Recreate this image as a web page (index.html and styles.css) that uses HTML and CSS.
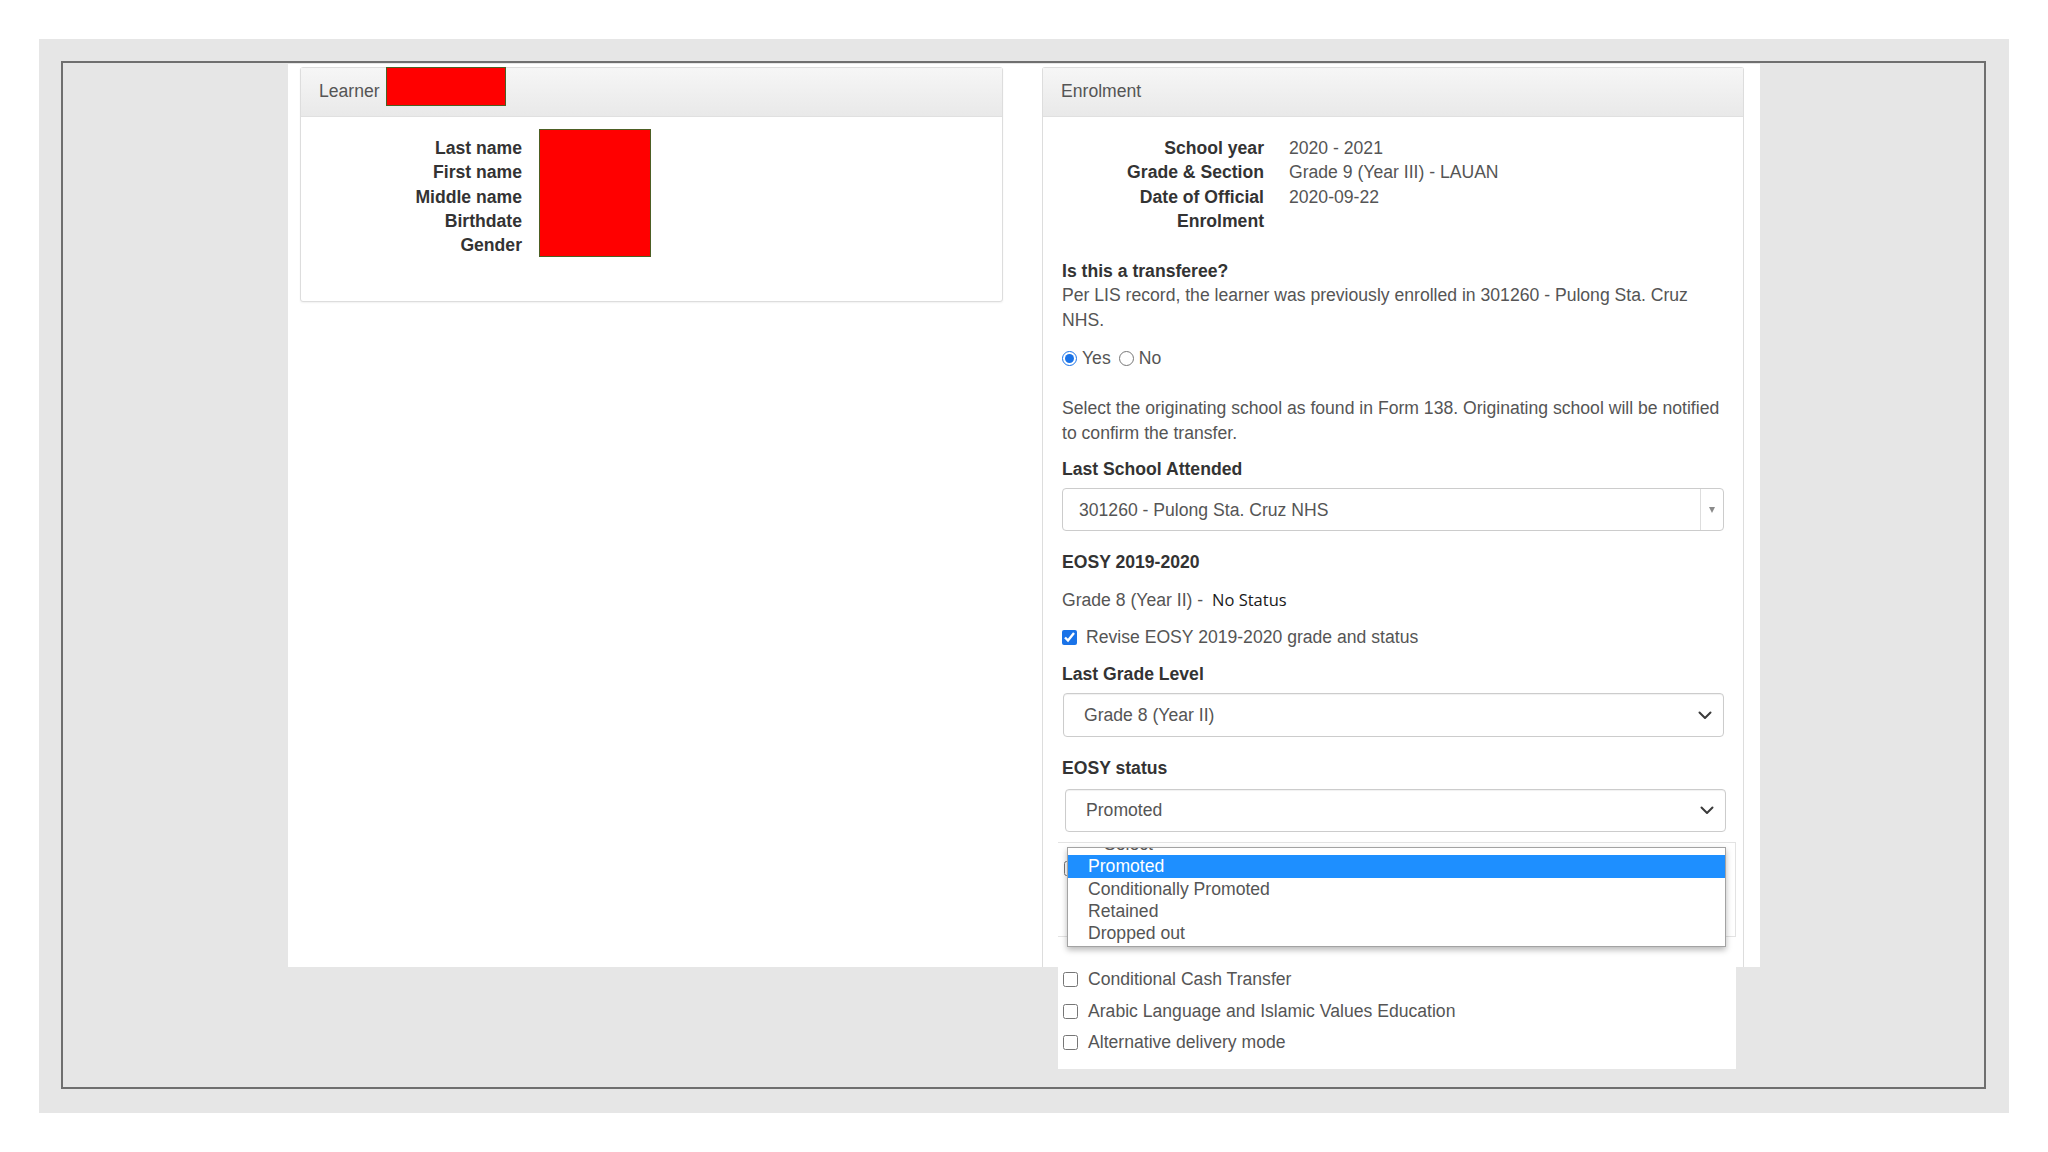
FILE: index.html
```html
<!DOCTYPE html>
<html lang="en">
<head>
<meta charset="utf-8">
<title>Enrolment</title>
<link rel="stylesheet" href="styles.css">
</head>
<body>
<div class="outer">
  <div class="frame">
    <div class="page">
      <section class="card learner">
        <div class="card-head">
          <span class="head-title">Learner</span>
          <span class="redact redact-head"></span>
        </div>
        <div class="learner-body">
          <div class="labels">
            <div>Last name</div>
            <div>First name</div>
            <div>Middle name</div>
            <div>Birthdate</div>
            <div>Gender</div>
          </div>
          <span class="redact redact-body"></span>
        </div>
      </section>

      <section class="card enrol">
        <div class="card-head">
          <span class="head-title">Enrolment</span>
        </div>
        <div class="enrol-body">
          <dl class="info">
            <dt>School year</dt><dd>2020 - 2021</dd>
            <dt>Grade &amp; Section</dt><dd>Grade 9 (Year III) - LAUAN</dd>
            <dt>Date of Official Enrolment</dt><dd>2020-09-22</dd>
          </dl>

          <div class="q">Is this a transferee?</div>
          <p class="note">Per LIS record, the learner was previously enrolled in 301260 - Pulong Sta. Cruz NHS.</p>

          <div class="radios">
            <label class="radio"><input type="radio" name="transferee" checked>Yes</label>
            <label class="radio"><input type="radio" name="transferee">No</label>
          </div>

          <p class="note note2">Select the originating school as found in Form 138. Originating school will be notified to confirm the transfer.</p>

          <div class="lbl lbl-first">Last School Attended</div>
          <div class="s2">
            <span class="s2-text">301260 - Pulong Sta. Cruz NHS</span>
            <span class="s2-arrow"><span class="tri"></span></span>
          </div>

          <div class="lbl">EOSY 2019-2020</div>
          <div class="grade-line">Grade 8 (Year II) - <span class="status">No Status</span></div>

          <label class="check-row revise"><input type="checkbox" checked>Revise EOSY 2019-2020 grade and status</label>

          <div class="lbl lbl-tight">Last Grade Level</div>
          <div class="sel sel-grade">
            <span>Grade 8 (Year II)</span>
            <svg class="chev" width="14" height="9" viewBox="0 0 14 9"><path d="M1.5 1.5l5.5 5.5 5.5-5.5" fill="none" stroke="#3a3a3a" stroke-width="2" stroke-linecap="round" stroke-linejoin="round"/></svg>
          </div>

          <div class="lbl">EOSY status</div>
          <div class="sel sel-status">
            <span>Promoted</span>
            <svg class="chev" width="14" height="9" viewBox="0 0 14 9"><path d="M1.5 1.5l5.5 5.5 5.5-5.5" fill="none" stroke="#3a3a3a" stroke-width="2" stroke-linecap="round" stroke-linejoin="round"/></svg>
            <div class="menu">
              <div class="menu-list">
                <div class="opt opt-first">Select</div>
                <div class="opt opt-active">Promoted</div>
                <div class="opt">Conditionally Promoted</div>
                <div class="opt">Retained</div>
                <div class="opt">Dropped out</div>
              </div>
            </div>
          </div>

          <div class="extras">
            <div class="subpanel">
              <label class="check-row hidden-row"><input type="checkbox">Repeater</label>
            </div>
            <div class="checks">
              <label class="check-row"><input type="checkbox">Conditional Cash Transfer</label>
              <label class="check-row"><input type="checkbox">Arabic Language and Islamic Values Education</label>
              <label class="check-row"><input type="checkbox">Alternative delivery mode</label>
            </div>
          </div>
        </div>
      </section>
    </div>
  </div>
</div>
</body>
</html>
```

FILE: styles.css
```css
html, body {
  margin: 0;
  padding: 0;
  background: #ffffff;
}

body {
  font-family: "Liberation Sans", Arial, sans-serif;
  font-size: 17.6px;
  line-height: 24.3px;
  color: #555555;
}

.outer {
  margin: 39px 0 0 39px;
  width: 1970px;
  height: 1074px;
  background: #e6e6e6;
  padding: 22px 23px 24px 22px;
  box-sizing: border-box;
}

.frame {
  height: 100%;
  border: 2px solid #6f6f6f;
  box-sizing: border-box;
  background: #e6e6e6;
  padding: 1px 0 0 225px;
}

.page {
  width: 1472px;
  height: 903px;
  background: #ffffff;
  box-sizing: border-box;
  padding: 3px 16px 0 12px;
  display: flex;
  align-items: flex-start;
  gap: 39px;
}

.card {
  background: #ffffff;
  border: 1px solid #dddddd;
  border-radius: 3px;
  box-sizing: border-box;
}

.learner {
  width: 703px;
  box-shadow: 0 1px 2px rgba(0, 0, 0, 0.06);
}

.enrol {
  width: 702px;
  height: 900px;
  border-bottom: none;
  border-radius: 3px 3px 0 0;
}

.card-head {
  height: 49px;
  box-sizing: border-box;
  border-bottom: 1px solid #e0e0e0;
  background: linear-gradient(#f6f6f6, #e9e9e9);
  display: flex;
  align-items: flex-start;
  padding: 0 18px;
}

.head-title {
  margin-top: 11px;
  color: #555555;
}

.redact {
  display: block;
  background: #ff0000;
  border: 1px solid #4d5f24;
  box-sizing: border-box;
}

.redact-head {
  width: 120px;
  height: 39px;
  margin: -1px 0 0 6px;
}

/* Learner card */
.learner-body {
  display: flex;
  align-items: flex-start;
  padding: 19px 0 44px 21px;
}

.labels {
  width: 200px;
  text-align: right;
  font-weight: bold;
  color: #333333;
}

.redact-body {
  width: 112px;
  height: 128px;
  margin: -7px 0 0 17px;
}

/* Enrolment card */
.enrol-body {
  padding: 19px 19px 0 19px;
}

.info {
  margin: 0 0 0 2px;
  display: grid;
  grid-template-columns: 200px 1fr;
  column-gap: 25px;
}

.info dt {
  text-align: right;
  font-weight: bold;
  color: #333333;
}

.info dd {
  margin: 0;
}

.q {
  margin-top: 26px;
  font-weight: bold;
  color: #333333;
}

.note {
  margin: 0;
}

.note2 {
  margin-top: 26px;
}

.radios {
  margin-top: 14px;
  display: flex;
  align-items: center;
  gap: 8px;
}

.radio {
  display: flex;
  align-items: center;
}

.radio input {
  width: 15px;
  height: 15px;
  margin: 0 5px 0 0;
  accent-color: #1a73e8;
}

.lbl {
  margin-top: 19px;
  font-weight: bold;
  color: #333333;
}

.lbl-first {
  margin-top: 12px;
}

.lbl-tight {
  margin-top: 13px;
}

.s2 {
  margin-top: 7px;
  height: 43px;
  border: 1px solid #cccccc;
  border-radius: 4px;
  box-sizing: border-box;
  display: flex;
  align-items: center;
  background: #ffffff;
}

.s2-text {
  flex: 1;
  padding-left: 16px;
  color: #555555;
}

.s2-arrow {
  width: 22px;
  align-self: stretch;
  border-left: 1px solid #dddddd;
  display: flex;
  align-items: center;
  justify-content: center;
}

.tri {
  width: 0;
  height: 0;
  border-left: 3.5px solid transparent;
  border-right: 3.5px solid transparent;
  border-top: 6px solid #8a8a8a;
}

.grade-line {
  margin-top: 13px;
}

.status {
  font-family: "Open Sans", "Noto Sans", sans-serif;
  font-size: 16.5px;
  color: #1a1a1a;
  margin-left: 4px;
}

.check-row {
  display: flex;
  align-items: center;
}

.check-row input {
  width: 15px;
  height: 15px;
  margin: 0 10px 0 0;
  accent-color: #1a73e8;
}

.revise {
  margin-top: 13px;
}

.revise input {
  margin-right: 9px;
}

.sel {
  position: relative;
  height: 44px;
  border: 1px solid #cccccc;
  border-radius: 4px;
  box-sizing: border-box;
  display: flex;
  align-items: center;
  justify-content: space-between;
  padding: 0 11px 0 20px;
  box-shadow: inset 0 1px 1px rgba(0, 0, 0, 0.06);
  background: #ffffff;
}

.sel-grade {
  margin-top: 7px;
  margin-left: 1px;
  width: 661px;
}

.sel-status {
  margin-top: 8px;
  margin-left: 3px;
  width: 661px;
  height: 43px;
}

.chev {
  display: block;
}

.menu {
  position: absolute;
  top: 57px;
  left: 1px;
  width: 659px;
  height: 100px;
  box-sizing: border-box;
  background: #ffffff;
  border: 1px solid #a3a3a3;
  box-shadow: 0 3px 6px rgba(0, 0, 0, 0.28);
  overflow: hidden;
  z-index: 5;
}

.menu-list {
  margin-top: -15px;
}

.opt {
  height: 22.4px;
  line-height: 22.4px;
  padding-left: 20px;
  color: #555555;
  white-space: nowrap;
}

.opt-first {
  padding-left: 36px;
}

.opt-active {
  background: #1e8fff;
  color: #ffffff;
}

.extras {
  margin: 10px 0 0 -4px;
  width: 678px;
  background: #ffffff;
  padding-bottom: 11px;
}

.subpanel {
  height: 95px;
  box-sizing: border-box;
  border-top: 1px solid #e3e3e3;
  border-bottom: 1px solid #e3e3e3;
  border-right: 1px solid #e3e3e3;
  padding-top: 14px;
}

.hidden-row {
  padding-left: 6px;
}

.checks {
  padding-top: 27px;
}

.checks .check-row {
  height: 31.5px;
  padding-left: 5px;
}
```
